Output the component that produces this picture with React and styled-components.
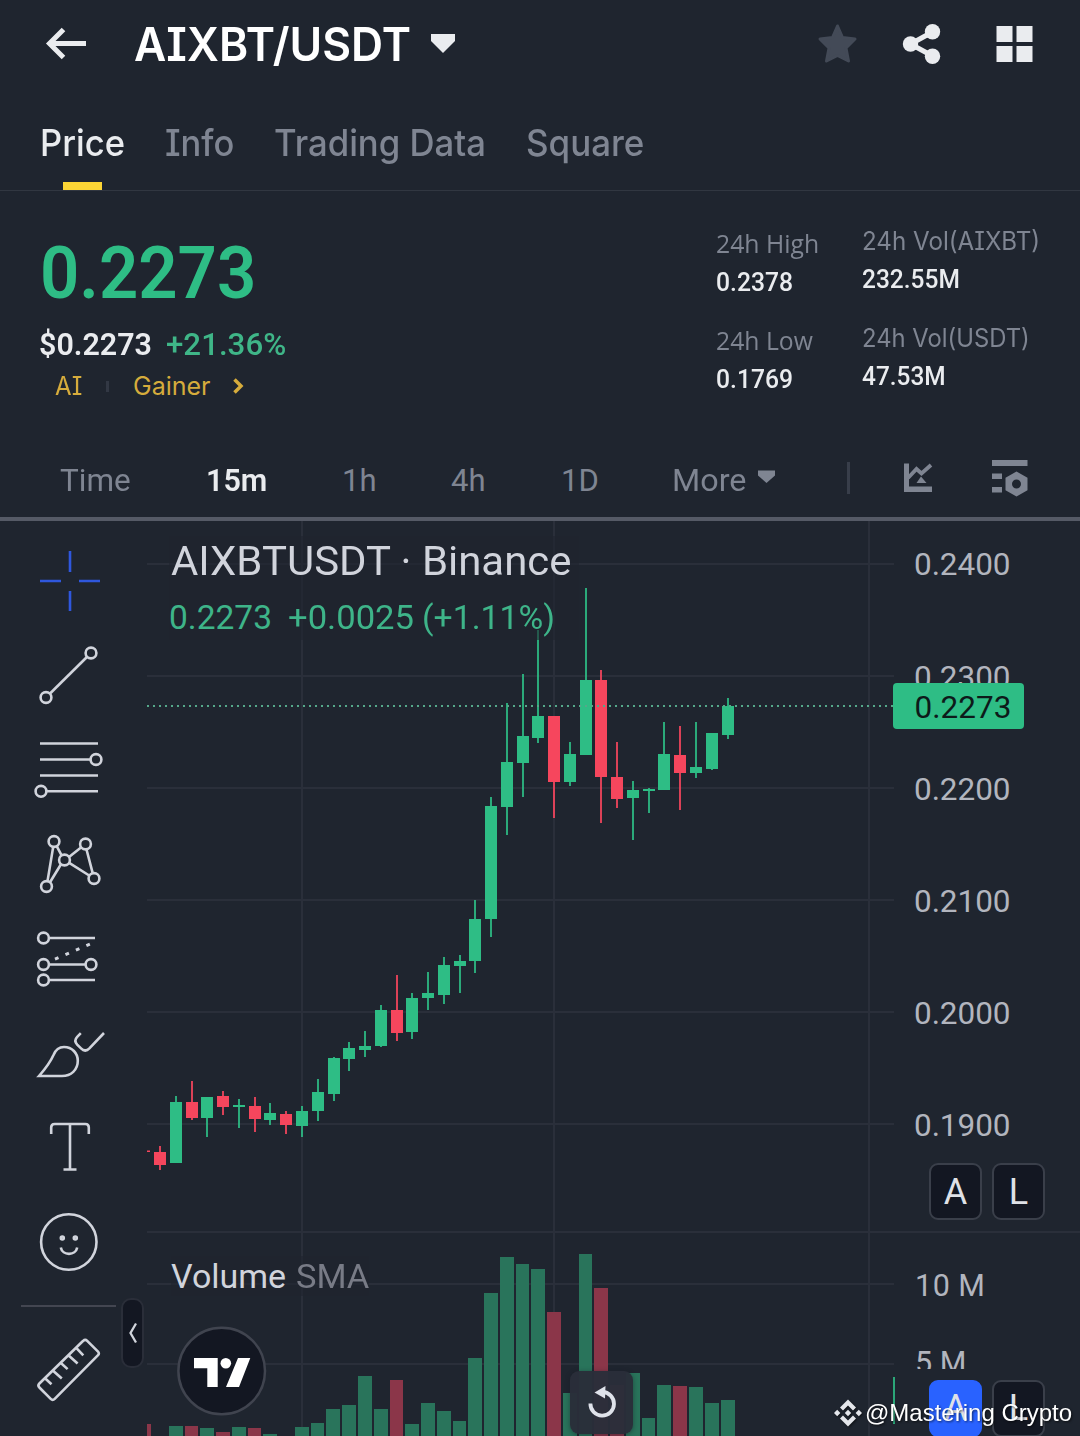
import React, { useLayoutEffect, useRef, useState } from "react";
import styled, { createGlobalStyle } from "styled-components";

const C = {
  bg: "#1f252f",
  text: "#eaecef",
  muted: "#7f8592",
  green: "#2ebd85",
  red: "#f6465d",
  yellow: "#fcd535",
  chartText: "#d1d4dc",
  axis: "#b2b5be",
  grid: "#2a2f3a",
  dark: "#131722",
};

const Global = createGlobalStyle`
  * { box-sizing: border-box; }
  body { margin: 0; background: ${C.bg}; font-family: Roboto, sans-serif; }
`;

const sans = '"Open Sans", sans-serif';
const slab = 'Inter, sans-serif';

/* ---------- text that is condensed or widened to a given width ---------- */

const FitBox = styled.span`
  display: block;
  flex: none;
  width: ${(p) => p.$w}px;
  white-space: pre;
  color: ${(p) => p.$color || C.text};
  font-family: ${(p) => p.$font || "Roboto, sans-serif"};
  font-size: ${(p) => p.$size}px;
  font-weight: ${(p) => p.$weight || 400};
  line-height: ${(p) => p.$line || 40}px;
  font-feature-settings: ${(p) => (p.$font === slab ? '"cv08" 1' : "normal")};
`;
const FitInner = styled.span`
  display: inline-block;
  transform-origin: 0 50%;
`;

function Fit({ children, ...rest }) {
  const ref = useRef(null);
  const [scale, setScale] = useState(1);
  useLayoutEffect(() => {
    setScale(rest.$w / ref.current.offsetWidth);
  }, [rest.$w]);
  return (
    <FitBox {...rest}>
      <FitInner ref={ref} style={{ transform: `scaleX(${scale})` }}>
        {children}
      </FitInner>
    </FitBox>
  );
}

/* ---------- page ---------- */

const Page = styled.main`
  width: 1080px;
  height: 1436px;
  overflow: hidden;
  display: flex;
  flex-direction: column;
  background: ${C.bg};
`;

const Header = styled.header`
  height: 88px;
  flex: none;
  display: flex;
  align-items: center;
  padding: 0 47px 0 44px;
`;
const Pair = styled.div`
  display: flex;
  align-items: center;
  gap: 20px;
  margin-left: 46px;
`;
const Actions = styled.div`
  display: flex;
  align-items: center;
  margin-left: auto;
  gap: 45px;
`;
const ActionIcon = styled.svg`
  display: block;
  margin-right: ${(p) => p.$mr || 0}px;
`;

const Tabs = styled.nav`
  height: 103px;
  flex: none;
  display: flex;
  gap: 40px;
  padding-left: 40px;
  border-bottom: 1px solid #313741;
`;
const Tab = styled.div`
  height: 102px;
  display: flex;
  flex-direction: column;
  align-items: center;
  justify-content: space-between;
  padding-top: 35px;
`;
const Underline = styled.i`
  width: 39px;
  height: 8px;
  background: ${(p) => (p.$on ? C.yellow : "transparent")};
`;

const Overview = styled.section`
  height: 252px;
  flex: none;
  display: flex;
  justify-content: space-between;
  padding: 30px 40px 0 40px;
`;
const Quote = styled.div`
  display: flex;
  flex-direction: column;
  padding-top: 10px;
`;
const PriceRow = styled.div`
  height: 84px;
`;
const FiatRow = styled.div`
  display: flex;
  gap: 14px;
  height: 56px;
  padding-top: 10px;
  margin-left: -1px;
`;
const TagRow = styled.div`
  display: flex;
  align-items: center;
  height: 30px;
  padding-left: 15px;
`;
const TagSep = styled.i`
  width: 3px;
  height: 11px;
  background: #323844;
  margin: 0 24px 0 24px;
`;
const Chevron = styled.svg`
  margin-left: 21px;
`;
const Stats = styled.div`
  display: flex;
  gap: 43px;
`;
const StatColumn = styled.div`
  display: flex;
  flex-direction: column;
  width: ${(p) => p.$w}px;
  padding-top: ${(p) => p.$top}px;
  gap: 18px;
`;

const Frames = styled.div`
  height: 78px;
  flex: none;
  display: flex;
  align-items: center;
  padding: 0 0 4px 60px;
  border-bottom: 4px solid #555a66;
`;
const Frame = styled.div`
  display: flex;
  align-items: center;
  gap: 12px;
  padding-top: 6px;
  margin-right: ${(p) => p.$mr}px;
`;
const Caret = styled.svg`
  margin-bottom: 6px;
`;
const FrameSep = styled.i`
  width: 3px;
  height: 32px;
  margin-right: 53px;
  background: #383e4a;
`;

const ChartArea = styled.section`
  flex: 1;
  display: grid;
  grid-template-columns: 147px 933px;
  position: relative;
`;
const Sidebar = styled.aside`
  padding-top: 13px;
  height: 915px;
  overflow: hidden;
`;
const Tool = styled.div`
  height: 94.5px;
  width: 140px;
  display: flex;
  align-items: center;
  justify-content: center;
`;
const ToolIcon = styled.svg`
  display: block;
  fill: none;
  stroke: ${(p) => p.$color || C.chartText};
  stroke-width: 2.6;
`;
const ToolDivider = styled.i`
  display: block;
  width: 95px;
  height: 2px;
  margin: 15px 0 16px 21px;
  background: #434651;
`;
const Handle = styled.div`
  position: absolute;
  left: 121px;
  top: 777px;
  width: 23px;
  height: 70px;
  display: flex;
  align-items: center;
  justify-content: center;
  border: 2px solid #2a2e39;
  border-radius: 10px;
  background: ${C.dark};
`;
const Plot = styled.svg`
  display: block;
  font-family: Roboto, sans-serif;
`;
const Legend = styled.div`
  position: absolute;
  left: 169px;
  top: 15px;
  width: 410px;
  height: 104px;
  background: rgba(31, 37, 47, 0.6);
`;
const LegendRow = styled.div`
  display: flex;
  padding-left: ${(p) => p.$pl || 0}px;
  padding-top: ${(p) => p.$pt || 0}px;
`;
const Gap = styled.i`
  width: ${(p) => p.$w}px;
`;
const VolumeLegend = styled.div`
  position: absolute;
  left: 171px;
  top: 735px;
  display: flex;
  gap: 10px;
  background: rgba(31, 37, 47, 0.6);
`;
const Brand = styled.svg`
  position: absolute;
  left: 176px;
  top: 804px;
`;
const Reset = styled.div`
  position: absolute;
  left: 570px;
  top: 850px;
  width: 63px;
  height: 63px;
  border-radius: 9px;
  background: rgba(42, 46, 57, 0.96);
  box-shadow: 0 1px 5px rgba(19, 23, 34, 0.45);
  display: flex;
  align-items: center;
  justify-content: center;
`;
const ScaleButtons = styled.div`
  position: absolute;
  left: 929px;
  top: ${(p) => p.$top}px;
  display: flex;
  gap: 10px;
`;
const ScaleButton = styled.div`
  width: 53px;
  height: 57px;
  border: 2px solid ${(p) => (p.$on ? "#2962ff" : "#3a3f4a")};
  border-radius: 9px;
  background: ${(p) => (p.$on ? "#2962ff" : C.dark)};
  color: #dfe1e7;
  font-size: 36px;
  line-height: ${(p) => (p.$low ? 53 : 55)}px;
  text-align: center;
`;
const Watermark = styled.div`
  position: absolute;
  left: 834px;
  top: 876px;
  display: flex;
  align-items: center;
  gap: 3px;
  filter: drop-shadow(1px 1px 1px rgba(0, 0, 0, 0.6));
`;

/* ---------- data ---------- */

const tabs = [
  ["Price", 85, true],
  ["Info", 69, false],
  ["Trading Data", 212, false],
  ["Square", 118, false],
];

// x centre, body top, body bottom, wick top, wick bottom, rising
const candles = [
  [160, 1152, 1165, 1146, 1170, 0],
  [176, 1102, 1163, 1096, 1163, 1],
  [192, 1102, 1118, 1081, 1120, 0],
  [207, 1097, 1118, 1097, 1137, 1],
  [223, 1096, 1107, 1091, 1115, 0],
  [239, 1105, 1107, 1099, 1128, 1],
  [255, 1106, 1119, 1097, 1132, 0],
  [270, 1113, 1120, 1103, 1125, 1],
  [286, 1114, 1125, 1111, 1134, 0],
  [302, 1111, 1126, 1106, 1137, 1],
  [318, 1092, 1111, 1079, 1121, 1],
  [334, 1058, 1094, 1057, 1101, 1],
  [349, 1048, 1059, 1042, 1071, 1],
  [365, 1046, 1050, 1031, 1057, 1],
  [381, 1010, 1046, 1005, 1047, 1],
  [397, 1010, 1033, 975, 1041, 0],
  [412, 998, 1032, 993, 1039, 1],
  [428, 993, 998, 972, 1010, 1],
  [444, 965, 995, 957, 1004, 1],
  [460, 961, 966, 955, 993, 1],
  [475, 919, 961, 900, 973, 1],
  [491, 806, 919, 797, 937, 1],
  [507, 762, 807, 703, 835, 1],
  [523, 736, 763, 674, 797, 1],
  [538, 716, 738, 630, 743, 1],
  [554, 716, 782, 716, 818, 0],
  [570, 754, 782, 742, 786, 1],
  [586, 680, 755, 588, 755, 1],
  [601, 680, 777, 670, 823, 0],
  [617, 777, 799, 742, 808, 0],
  [633, 790, 798, 781, 840, 1],
  [649, 789, 791, 788, 813, 1],
  [664, 754, 790, 722, 790, 1],
  [680, 755, 773, 726, 810, 0],
  [696, 767, 773, 722, 778, 1],
  [712, 733, 769, 733, 770, 1],
  [728, 706, 735, 698, 739, 1],
];

// left, width, top, rising
const volumes = [
  [147, 4, 1424, 0],
  [169, 14, 1426, 1],
  [185, 13, 1426, 0],
  [200, 14, 1428, 1],
  [216, 14, 1432, 0],
  [232, 14, 1427, 1],
  [248, 13, 1428, 0],
  [263, 14, 1434, 1],
  [295, 14, 1427, 1],
  [311, 13, 1423, 1],
  [326, 14, 1409, 1],
  [342, 14, 1405, 1],
  [358, 14, 1376, 1],
  [374, 14, 1409, 1],
  [390, 13, 1380, 0],
  [405, 14, 1424, 1],
  [421, 14, 1403, 1],
  [437, 14, 1411, 1],
  [453, 13, 1421, 1],
  [468, 14, 1358, 1],
  [484, 14, 1293, 1],
  [500, 14, 1257, 1],
  [516, 13, 1264, 1],
  [531, 14, 1269, 1],
  [547, 14, 1312, 0],
  [563, 14, 1393, 1],
  [579, 13, 1254, 1],
  [594, 14, 1288, 0],
  [610, 14, 1385, 0],
  [626, 14, 1373, 1],
  [642, 13, 1418, 1],
  [657, 14, 1385, 1],
  [673, 14, 1386, 0],
  [689, 14, 1387, 1],
  [705, 14, 1403, 1],
  [721, 14, 1400, 1],
];

// label, grid line, text baseline
const priceLines = [
  ["0.2400", 564, 575],
  ["0.2300", 676, 687.5],
  ["0.2200", 788, 800],
  ["0.2100", 900, 912],
  ["0.2000", 1012, 1024],
  ["0.1900", 1124, 1136],
];

/* ---------- drawings ---------- */

const tools = [
  <g key="cross">
    <path d="M40 10v21M40 50v20M10 40h21M49 40h21" />
  </g>,
  <g key="line">
    <circle cx="61" cy="17" r="5.4" />
    <circle cx="16" cy="61.5" r="5.4" />
    <path d="M57.2 20.8 19.8 57.7" />
  </g>,
  <g key="fib">
    <path d="M10 13.5h58M10 29.5h50.5M10 45.5h58M17 61.3h51" />
    <circle cx="66" cy="29.5" r="5.4" />
    <circle cx="11" cy="61.3" r="5.4" />
  </g>,
  <g key="pattern">
    <circle cx="24" cy="16.5" r="5.4" />
    <circle cx="55.5" cy="19" r="5.4" />
    <circle cx="34.5" cy="35" r="5.4" />
    <circle cx="16.5" cy="61.500" r="5.4" />
    <circle cx="64" cy="53.500" r="5.4" />
    <path d="M23.2 21.9 17.5 56.1M26.8 21.3l4.8 9M31 39.3 20 57.300M39 31.900l12-9.400M39.200 37.900l20 12.600M56.500 24.500l6.200 23.600" />
  </g>,
  <g key="forecast">
    <circle cx="13.5" cy="19" r="5.4" />
    <circle cx="13.5" cy="45.5" r="5.4" />
    <circle cx="61" cy="45.5" r="5.4" />
    <circle cx="13.5" cy="61" r="5.4" />
    <path d="M19 19h46M19 45.5h36.5M19 61h46" />
    <path d="m25 40.200 36-15.600" strokeDasharray="3.800 7.600" strokeWidth="3" />
  </g>,
  <g key="brush">
    <path d="M9 62C16 54 20 49 23.500 41 25.500 36 29 33 34 33c8 0 13.800 6 13.800 13.800C47.800 56 41 62 32 62Z" />
    <path d="m50.800 19.200-3.600 3.600c-2.600 2.600-2.300 5.200 0 7.800l3.800 3.800c2.600 2.600 5.800 2.600 8.400 0L74 19" />
  </g>,
  <g key="text">
    <path d="M21.200 26v-6.500c0-2.500 1-3.500 3.500-3.500h30.600c2.500 0 3.500 1 3.500 3.500V26M40 16v45.500M33.500 61.500h13" />
  </g>,
  <g key="smile">
    <circle cx="38.800" cy="39" r="27.700" />
    <path d="M30.800 44.500c1.500 8.500 14.900 8.500 16.400 0" />
    <circle cx="32.300" cy="35" r="1.500" />
    <circle cx="45.300" cy="35" r="1.500" />
  </g>,
];

const Ruler = (
  <path
    strokeLinejoin="round"
    d="M53.200 10.800q2-2 4 0l10.600 10.600q2 2 0 4L24.700 68.800q-2 2-4 0L9.400 57.500q-2-2 0-4ZM15 48.200l6.500 6M22.800 40.500l9 8M30.600 32.800l7 6.300M38.400 25.200l9.200 8.300M46 17.600l7.300 7.800"
  />
);

function Chart() {
  const T = 521;
  return (
    <Plot width="933" height="915" viewBox="147 521 933 915">
      <g fill={C.grid}>
        {[301, 553, 868].map((x) => (
          <rect key={x} x={x} y={T} width="2" height="915" />
        ))}
        {priceLines.map(([t, y]) => (
          <rect key={t} x="147" y={y - 1} width="747" height="2" />
        ))}
        <rect x="147" y="1231" width="933" height="2" />
        <rect x="147" y="1283" width="747" height="2" />
        <rect x="147" y="1363" width="747" height="2" />
      </g>
      {volumes.map(([x, w, y, up]) => (
        <rect key={x} x={x} y={y} width={w} height={1436 - y} fill={up ? "#29745b" : "#8b3649"} />
      ))}
      <rect x="147" y="1150.500" width="3" height="1.500" fill={C.red} />
      {candles.map(([x, a, b, c, d, up]) => (
        <g key={x} fill={up ? C.green : C.red}>
          <rect x={x - 1} y={c} width="2" height={d - c} opacity="0.88" />
          <rect x={x - 6} y={a} width="12" height={b - a} />
        </g>
      ))}
      <path d="M147 706H893" stroke="#55a88a" strokeWidth="2" strokeDasharray="2 4" />
      <g fontSize="31.5" fill={C.axis}>
        {priceLines.map(([t, , base]) => (
          <text key={t} x="914" y={base} textLength="96.500">
            {t}
          </text>
        ))}
        <text x="915" y="1296" fontSize="30.5" textLength="70">10 M</text>
        <svg x="893" y="1340" width="187" height="29">
          <text x="22" y="33" fontSize="30.5">5 M</text>
        </svg>
      </g>
      <rect x="893" y="683" width="131" height="46" rx="4" fill={C.green} />
      <text x="914.500" y="718" fontSize="31.500" textLength="97" fill="#0d1a1a">
        0.2273
      </text>
      <rect x="893" y="1377" width="2" height="47" fill={C.green} opacity="0.85" />
    </Plot>
  );
}

/* ---------- app ---------- */

const Stat = ({ label, w, value, vw, font = sans }) => (
  <div>
    <Fit $w={w} $size={25.5} $font={font} $color={C.muted} $line={39}>{label}</Fit>
    <Fit $w={vw} $size={25} $weight={500} $line={40}>{value}</Fit>
  </div>
);

export default function App() {
  return (
    <Page>
      <Global />
      <Header>
        <svg width="44" height="36" viewBox="44 26 44 36" fill="none" stroke={C.text} strokeWidth="5">
          <path d="M86 43.500H50M63.500 29.500 49.500 43.500l14 14" />
        </svg>
        <Pair>
          <Fit $w={277} $size={46} $weight={600} $font={slab} $line={60} $color="#fff">AIXBT/USDT</Fit>
          <svg width="24" height="20" viewBox="0 0 24 20" fill={C.text}>
            <path d="M0 0h24v7L12 19 0 7Z" />
          </svg>
        </Pair>
        <Actions>
          <ActionIcon width="40" height="40" viewBox="0 0 40 40" fill="#434a57" stroke="#434a57" strokeWidth="3" strokeLinejoin="round">
            <path d="m20.500 2 5 11.500 12.500 1.500-9 9L31.500 37l-11-5.500L9.500 37l2.500-13-9-9 12.500-1.500Z" />
          </ActionIcon>
          <ActionIcon $mr={9} width="40" height="40" viewBox="0 0 40 40" fill={C.text}>
            <path d="M30.500 8 8.500 20l22 12" fill="none" stroke={C.text} strokeWidth="5" />
            <circle cx="8.500" cy="20" r="7.700" />
            <circle cx="30.500" cy="7.700" r="7.700" />
            <circle cx="30.500" cy="32.200" r="7.700" />
          </ActionIcon>
          <ActionIcon width="37" height="36" viewBox="0 0 37 36" fill={C.text}>
            <path d="M.5 0h16v16h-16ZM20.500 0h16v16h-16ZM.5 20h16v16h-16ZM20.500 20h16v16h-16Z" />
          </ActionIcon>
        </Actions>
      </Header>

      <Tabs>
        {tabs.map(([t, w, on]) => (
          <Tab key={t}>
            <Fit $w={w} $size={37} $weight={500} $font={slab} $color={on ? C.text : C.muted}>{t}</Fit>
            <Underline $on={on} />
          </Tab>
        ))}
      </Tabs>

      <Overview>
        <Quote>
          <PriceRow>
            <Fit $w={216} $size={73} $weight={600} $color={C.green} $line={84}>0.2273</Fit>
          </PriceRow>
          <FiatRow>
            <Fit $w={113} $size={31.5} $weight={600}>$0.2273</Fit>
            <Fit $w={120} $size={30.5} $weight={500} $color="#3fb688">+21.36%</Fit>
          </FiatRow>
          <TagRow>
            <Fit $w={27} $size={25} $font={slab} $color="#d6ac3c">AI</Fit>
            <TagSep />
            <Fit $w={78} $size={25} $font={slab} $color="#d6ac3c">Gainer</Fit>
            <Chevron width="14" height="18" viewBox="0 0 14 18" fill="none" stroke="#d6ac3c" strokeWidth="3.5">
              <path d="M2.500 2.500 9 9l-6.500 6.500" />
            </Chevron>
          </TagRow>
        </Quote>
        <Stats>
          <StatColumn $w={103} $top={3}>
            <Stat label="24h High" w={103} value="0.2378" vw={77} />
            <Stat label="24h Low" w={97} value="0.1769" vw={77} />
          </StatColumn>
          <StatColumn $w={178} $top={0}>
            <Stat label="24h Vol(AIXBT)" w={178} value="232.55M" vw={98} font={slab} />
            <Stat label="24h Vol(USDT)" w={168} value="47.53M" vw={84} font={slab} />
          </StatColumn>
        </Stats>
      </Overview>

      <Frames>
        <Frame $mr={75}><Fit $w={71} $size={31} $color={C.muted}>Time</Fit></Frame>
        <Frame $mr={75}><Fit $w={61} $size={31} $weight={600}>15m</Fit></Frame>
        <Frame $mr={74}><Fit $w={35} $size={31} $color={C.muted}>1h</Fit></Frame>
        <Frame $mr={75}><Fit $w={35} $size={31} $color={C.muted}>4h</Fit></Frame>
        <Frame $mr={73}><Fit $w={38} $size={31} $color={C.muted}>1D</Fit></Frame>
        <Frame $mr={72}>
          <Fit $w={74} $size={31} $color={C.muted}>More</Fit>
          <Caret width="17" height="18" viewBox="0 0 17 18" fill={C.muted}>
            <path d="M0 1.500h17v5L8.500 14 0 6.500Z" />
          </Caret>
        </Frame>
        <FrameSep />
        <svg width="30" height="36" viewBox="903 460 30 36" fill={C.muted}>
          <path d="M904 463.500h5v23h23v5.500h-28Z" />
          <path d="m908 478 8.500-9 5 4.500 9.500-8.500" fill="none" stroke={C.muted} strokeWidth="3.800" />
          <path d="M921 476.500 926.500 483h-10Z" />
        </svg>
        <svg width="96" height="38" viewBox="933 460 96 38" fill={C.muted}>
          <path d="M992 461h35.500v6H992ZM992 474.500h10v5.500h-10ZM992 488h10v5.500h-10Z" />
          <path fillRule="evenodd" d="m1016.500 472.500 11 6.200v12.600l-11 6.200-11-6.200v-12.600Zm0 8a4.500 4.500 0 1 0 0 9a4.500 4.500 0 1 0 0-9Z" />
        </svg>
      </Frames>

      <ChartArea>
        <Sidebar>
          {tools.map((t, i) => (
            <Tool key={t.key}>
              <ToolIcon width="80" height="80" viewBox="0 0 80 80" $color={i === 0 ? "#2f57dd" : undefined}>
                {t}
              </ToolIcon>
            </Tool>
          ))}
          <ToolDivider />
          <Tool>
            <ToolIcon width="80" height="80" viewBox="0 0 80 80">{Ruler}</ToolIcon>
          </Tool>
        </Sidebar>
        <Chart />
        <Legend>
          <LegendRow $pl={1.5} $pt={5}>
            <Fit $w={401} $size={41.5} $color={C.chartText} $line={40}>AIXBTUSDT · Binance</Fit>
          </LegendRow>
          <LegendRow $pt={17}>
            <Fit $w={103} $size={33.5} $color="#3eb489">0.2273</Fit>
            <Gap $w={16} />
            <Fit $w={126} $size={33.5} $color="#3eb489">+0.0025</Fit>
            <Gap $w={8} />
            <Fit $w={133} $size={33.5} $color="#3eb489">(+1.11%)</Fit>
          </LegendRow>
        </Legend>
        <VolumeLegend>
          <Fit $w={115} $size={34} $color={C.chartText}>Volume</Fit>
          <Fit $w={73} $size={34} $color="#787b86">SMA</Fit>
        </VolumeLegend>
        <Brand width="92" height="92" viewBox="176 1325 92 92">
          <circle cx="221.700" cy="1371" r="43.300" fill={C.dark} stroke="#40444f" strokeWidth="2.500" />
          <g fill="#fff">
            <path d="M194 1358h23.700v29h-10.400v-18.700H194ZM238 1358h12.300L239 1387h-13Z" />
            <circle cx="225.800" cy="1363.200" r="5.300" />
          </g>
        </Brand>
        <Handle>
          <svg width="10" height="22" viewBox="0 0 10 22" fill="none" stroke={C.chartText} strokeWidth="2.3">
            <path d="M8 1.500 2.500 11 8 20.500" />
          </svg>
        </Handle>
        <Reset>
          <svg width="36" height="36" viewBox="583.500 1385 36 36">
            <path d="M589.900 1403.500a11.800 11.800 0 1 0 12-11.500" fill="none" stroke="#dfe2ea" strokeWidth="3.800" />
            <path d="m594 1392.500 11-6.500-.5 12.500Z" fill="#dfe2ea" />
          </svg>
        </Reset>
        <ScaleButtons $top={642}>
          <ScaleButton>A</ScaleButton>
          <ScaleButton>L</ScaleButton>
        </ScaleButtons>
        <ScaleButtons $top={859}>
          <ScaleButton $on $low>A</ScaleButton>
          <ScaleButton $low>L</ScaleButton>
        </ScaleButtons>
        <Watermark>
          <svg width="28" height="28" viewBox="0 0 28 28" fill="#e4e6eb">
            <path d="m14 .500 8 8-3 3-5-5-5 5-3-3ZM14 27.500l-8-8 3-3 5 5 5-5 3 3ZM3.200 10.800 6.400 14l-3.200 3.200L0 14ZM24.800 10.800 28 14l-3.200 3.200-3.200-3.200ZM14 10.800l3.200 3.200-3.200 3.200-3.200-3.200Z" />
          </svg>
          <Fit $w={207} $size={24} $line={31} $color="#fff" $font={'"Liberation Sans", Arial, sans-serif'}>@Mastering Crypto</Fit>
        </Watermark>
      </ChartArea>
    </Page>
  );
}
